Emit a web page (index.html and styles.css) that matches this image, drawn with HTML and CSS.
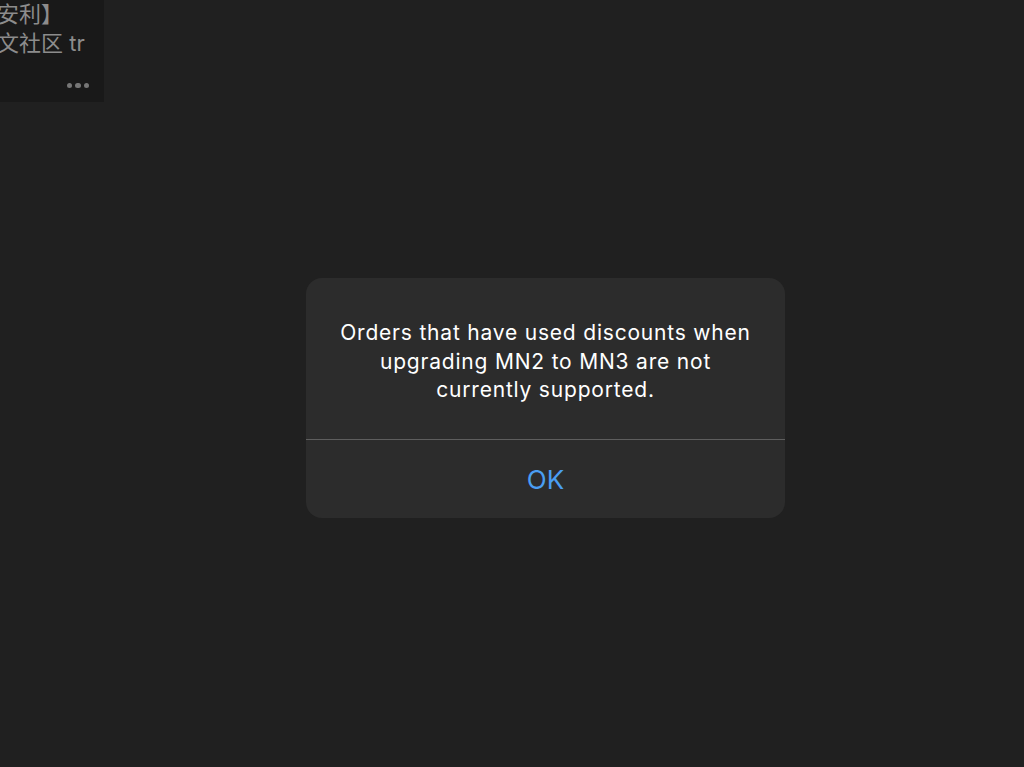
FILE: index.html
```html
<!DOCTYPE html>
<html lang="en">
<head>
<meta charset="utf-8">
<title>Alert</title>
<link rel="stylesheet" href="styles.css">
</head>
<body>
<div class="page">
  <div class="card">
    <div class="card-text">
      <div class="line">【安利】</div>
      <div class="line">中文社区 tr</div>
    </div>
    <div class="dots"><span></span><span></span><span></span></div>
  </div>
</div>
<div class="overlay">
  <div class="alert">
    <p class="message">Orders that have used discounts when upgrading MN2 to MN3 are not currently supported.</p>
    <div class="action">OK</div>
  </div>
</div>
</body>
</html>
```

FILE: styles.css
```css
html, body {
  margin: 0;
  padding: 0;
}
body {
  width: 1024px;
  height: 767px;
  background: #202020;
  overflow: hidden;
  font-family: Inter, "Noto Sans CJK SC", sans-serif;
}
.page {
  display: flex;
  flex-direction: column;
}
.card {
  width: 104px;
  height: 102px;
  background: #191919;
  overflow: hidden;
  display: flex;
  flex-direction: column;
}
.card-text {
  margin-top: 0;
  margin-left: -25px;
  color: #8c8c8c;
  font-size: 22px;
  line-height: 29px;
  white-space: nowrap;
}
.dots {
  display: flex;
  gap: 3px;
  margin-top: auto;
  margin-bottom: 14px;
  align-self: flex-end;
  margin-right: 15px;
}
.dots span {
  width: 5.5px;
  height: 5.5px;
  border-radius: 50%;
  background: #767676;
}
.overlay {
  position: absolute;
  left: 306px;
  top: 278px;
}
.alert {
  width: 479px;
  background: #2c2c2c;
  border-radius: 16px;
  overflow: hidden;
  display: flex;
  flex-direction: column;
}
.message {
  margin: 0;
  padding: 41px 28px 34px;
  color: #ffffff;
  font-size: 21px;
  letter-spacing: 0.8px;
  line-height: 28.5px;
  text-align: center;
  border-bottom: 1px solid #5e5e5e;
}
.action {
  height: 78px;
  padding-top: 2px;
  box-sizing: border-box;
  display: flex;
  align-items: center;
  justify-content: center;
  color: #4a9ef2;
  font-size: 26px;
}
```
